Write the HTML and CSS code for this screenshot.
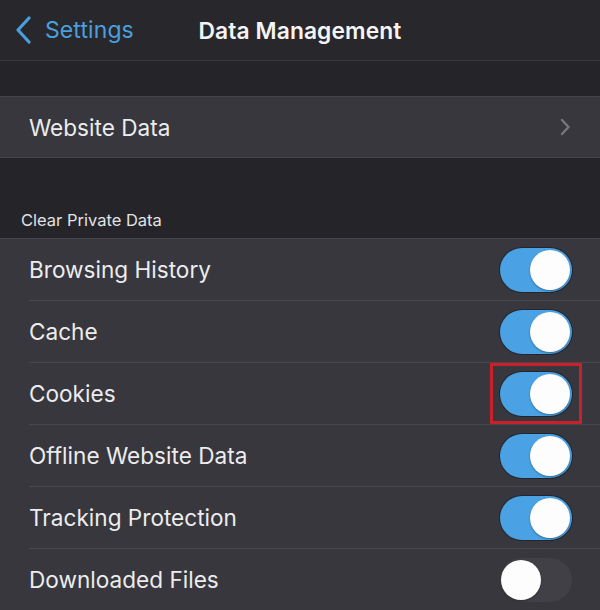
FILE: index.html
```html
<!DOCTYPE html>
<html lang="en">
<head>
<meta charset="utf-8">
<title>Data Management</title>
<link rel="stylesheet" href="styles.css">
</head>
<body>
<div class="screen">
  <header class="navbar">
    <div class="nav-left">
      <svg class="back-icon" width="18" height="28" viewBox="0 0 18 28" aria-hidden="true">
        <path d="M14 2 L3 14 L14 26" fill="none" stroke="#4a9fdf" stroke-width="3.2" stroke-linecap="round" stroke-linejoin="round"/>
      </svg>
      <span class="back-label">Settings</span>
    </div>
    <h1 class="nav-title">Data Management</h1>
    <div class="nav-right"></div>
  </header>

  <div class="spacer-top"></div>

  <div class="group">
    <div class="row row-link">
      <span class="row-label">Website Data</span>
      <svg class="chevron" width="12" height="18" viewBox="0 0 12 18" aria-hidden="true">
        <path d="M3 2 L9.5 9 L3 16" fill="none" stroke="#77777d" stroke-width="2.4" stroke-linecap="round" stroke-linejoin="round"/>
      </svg>
    </div>
  </div>

  <div class="section-header">Clear Private Data</div>

  <div class="group">
    <div class="row">
      <span class="row-label">Browsing History</span>
      <span class="toggle on"><span class="knob"></span></span>
    </div>
    <div class="row">
      <span class="row-label">Cache</span>
      <span class="toggle on"><span class="knob"></span></span>
    </div>
    <div class="row">
      <span class="row-label">Cookies</span>
      <span class="highlight"><span class="toggle on"><span class="knob"></span></span></span>
    </div>
    <div class="row">
      <span class="row-label">Offline Website Data</span>
      <span class="toggle on"><span class="knob"></span></span>
    </div>
    <div class="row">
      <span class="row-label">Tracking Protection</span>
      <span class="toggle on"><span class="knob"></span></span>
    </div>
    <div class="row">
      <span class="row-label">Downloaded Files</span>
      <span class="toggle off"><span class="knob"></span></span>
    </div>
  </div>
</div>
</body>
</html>
```

FILE: styles.css
```css
html, body {
  margin: 0;
  padding: 0;
}

body {
  background: #252529;
  font-family: "Inter", "Liberation Sans", sans-serif;
  color: #ececee;
  width: 600px;
  height: 610px;
  overflow: hidden;
}

.screen {
  display: flex;
  flex-direction: column;
}

.navbar {
  height: 60px;
  background: #28282c;
  border-bottom: 1px solid #38383d;
  display: grid;
  grid-template-columns: 1fr auto 1fr;
  align-items: center;
}

.nav-left {
  display: flex;
  align-items: center;
  padding-left: 15px;
  gap: 12px;
}

.back-icon {
  display: block;
}

.back-label {
  color: #4a9fdf;
  font-size: 23px;
  letter-spacing: 0.1px;
}

.nav-title {
  margin: 0;
  font-size: 22.8px;
  font-weight: 600;
  color: #f4f4f6;
  letter-spacing: 0.1px;
}

.spacer-top {
  height: 35px;
}

.group {
  background: #37373d;
  border-top: 1px solid #45454b;
  border-bottom: 1px solid #45454b;
}

.row {
  height: 61px;
  display: flex;
  align-items: center;
  justify-content: space-between;
  margin-left: 29px;
  padding-right: 28px;
  border-bottom: 1px solid #47474d;
}

.row:last-child {
  border-bottom: none;
}

.row-link {
  height: 60px;
  padding-right: 29px;
}

.row-label {
  font-size: 22.6px;
  color: #ececee;
}

.chevron {
  display: block;
}

.section-header {
  height: 80px;
  box-sizing: border-box;
  display: flex;
  align-items: flex-end;
  padding: 0 0 8px 21px;
  font-size: 16.5px;
  color: #e2e2e5;
}

.toggle {
  position: relative;
  display: block;
  width: 72px;
  height: 44px;
  border-radius: 22px;
  box-sizing: border-box;
  box-shadow: 0 0 0 1px #22262e;
}

.toggle.on {
  background: #4aa2e4;
}

.toggle.off {
  background: #404046;
  box-shadow: none;
}

.knob {
  position: absolute;
  top: 2px;
  width: 40px;
  height: 40px;
  border-radius: 50%;
  background: #fdfdfd;
  box-shadow: 0 1px 2px rgba(0, 0, 0, 0.35);
}

.toggle.on .knob {
  right: 2px;
}

.toggle.off .knob {
  left: 1px;
}

.highlight {
  display: block;
  margin-right: -10px;
  padding: 6px 7px 5px 7px;
  border: 3px solid #c9202a;
}
```
